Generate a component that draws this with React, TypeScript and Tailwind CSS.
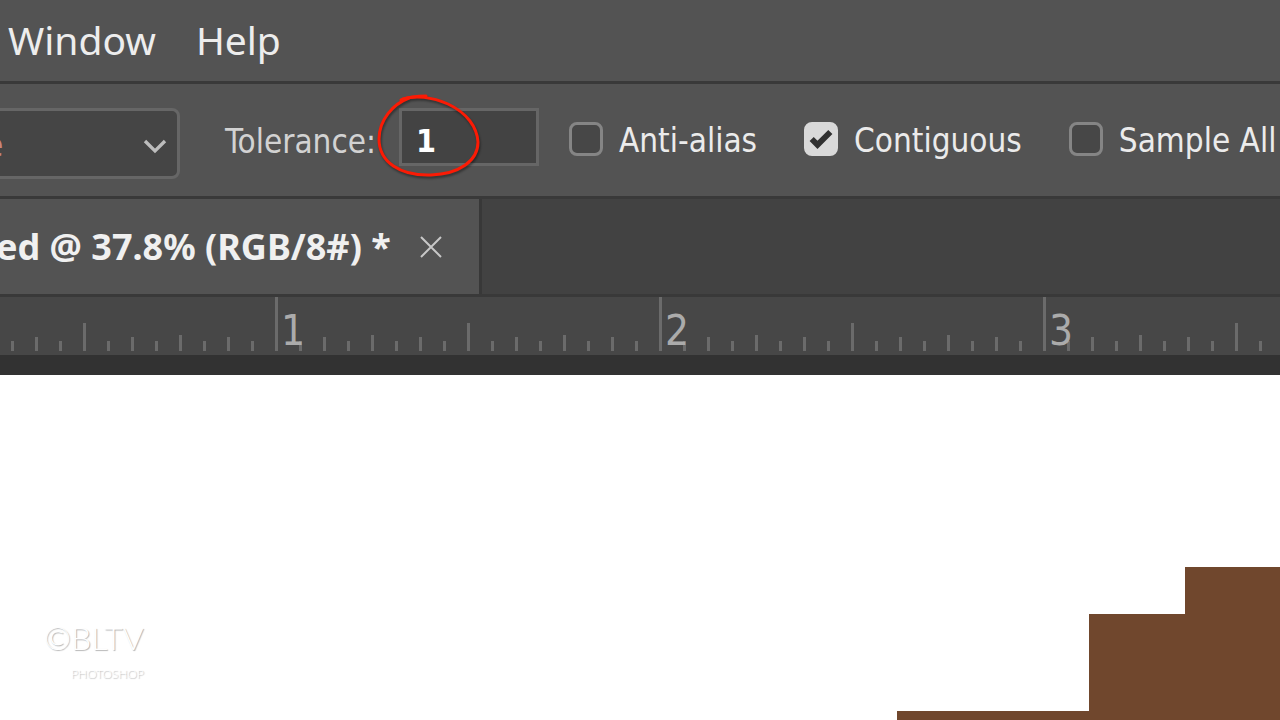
import { useState } from 'react';
import { Check, ChevronDown } from 'lucide-react';

const UNITS = [0, 1, 2, 3];

// sixteen ticks per ruler unit, the first one is the full-height divider
const TICKS = [
  'h-full', 'h-2.5', 'h-3.5', 'h-2.5', 'h-4', 'h-2.5', 'h-3.5', 'h-2.5',
  'h-7', 'h-2.5', 'h-3.5', 'h-2.5', 'h-4', 'h-2.5', 'h-3.5', 'h-2.5',
];

interface OptionProps {
  label: string;
  checked: boolean;
  onChange: (value: boolean) => void;
}

function OptionCheckbox({ label, checked, onChange }: OptionProps) {
  return (
    <label className="flex h-[62px] shrink-0 items-center gap-4 whitespace-nowrap">
      <span className="relative flex size-[34px] items-center justify-center">
        <input
          type="checkbox"
          checked={checked}
          onChange={(e) => onChange(e.target.checked)}
          className="size-full appearance-none rounded-lg border-[3px] border-[#858585] bg-[#474747] checked:border-[#d9d9d9] checked:bg-[#d9d9d9]"
        />
        {checked && (
          <Check className="pointer-events-none absolute size-7 text-[#303030]" strokeWidth={5} strokeLinecap="butt" strokeLinejoin="miter" />
        )}
      </span>
      <span className="pt-1">{label}</span>
    </label>
  );
}

function OptionsBar() {
  const [tolerance, setTolerance] = useState('1');
  const [antiAlias, setAntiAlias] = useState(false);
  const [contiguous, setContiguous] = useState(true);
  const [sampleAll, setSampleAll] = useState(false);

  return (
    <div className="flex h-[115px] items-start overflow-hidden border-b-[3px] border-[#393939] pt-6 font-['DejaVu_Sans_Condensed','Noto_Sans',sans-serif] text-[33px] text-[#ebebeb]">
      <div className="relative -ml-6 mr-[45px] shrink-0">
        <select
          aria-label="Sample size"
          className="h-[71px] w-[204px] appearance-none rounded-lg border-[3px] border-[#666666] bg-[#454545] pl-1.5 pt-1 text-[#c9867a]"
        >
          <option>e</option>
        </select>
        <ChevronDown className="pointer-events-none absolute right-[5px] top-[18px] size-10 text-[#bdbdbd]" strokeWidth={2} strokeLinecap="butt" strokeLinejoin="miter" />
      </div>
      <div className="relative mr-[30px] flex shrink-0 items-start">
        <label htmlFor="tolerance" className="w-[174px] leading-[68px] text-[#d2d2d2]">Tolerance:</label>
        <input
          id="tolerance"
          type="text"
          value={tolerance}
          onChange={(e) => setTolerance(e.target.value)}
          className="h-[58px] w-[140px] border-[3px] border-[#666666] bg-[#434343] px-3.5 pt-2 text-[32px] font-bold text-white"
        />
        <svg className="pointer-events-none absolute left-[150px] -top-4 h-[88px] w-[110px] drop-shadow-[1px_2px_1px_rgba(0,0,0,0.4)]" viewBox="0 0 110 88" fill="none" stroke="#fb1b05" strokeWidth="3" strokeLinecap="round">
          <path d="M28 7C40 3 57 5 73 12C92 21 102 35 103 50C103 69 84 82 56 83C25 84 4 70 4 47C4 28 18 12 34 6" />
          <path d="M26 8C34 5 42 4 51 4" />
        </svg>
      </div>
      <div className="flex shrink-0 gap-[47px]">
        <OptionCheckbox label="Anti-alias" checked={antiAlias} onChange={setAntiAlias} />
        <OptionCheckbox label="Contiguous" checked={contiguous} onChange={setContiguous} />
        <OptionCheckbox label="Sample All" checked={sampleAll} onChange={setSampleAll} />
      </div>
    </div>
  );
}

function Ruler() {
  return (
    <div className="flex h-[78px] overflow-hidden border-b-[20px] border-[#323232] bg-[#474747] pb-1">
      <div className="-ml-[109px] flex shrink-0">
        {UNITS.map((unit) => (
          <div key={unit} className="relative flex w-96 shrink-0 items-end">
            {TICKS.map((height, i) => (
              <span key={i} className={`${height} w-6 border-l-[3px] border-[#6b6b6b]`} />
            ))}
            {unit > 0 && (
              <span className="absolute left-1.5 top-2 font-['DejaVu_Sans_Condensed','DejaVu_Sans',sans-serif] text-[42px] leading-[52px] text-[#ababab]">{unit}</span>
            )}
          </div>
        ))}
      </div>
    </div>
  );
}

function Watermark() {
  return (
    <div className="absolute bottom-9 left-11 flex items-start font-['Lato','Liberation_Sans',sans-serif] font-light text-white [text-shadow:1px_1px_1px_#b5b5b5]">
      <span className="text-[32px] leading-[52px]">©</span>
      <div className="flex flex-col">
        <span className="text-[32px] leading-[52px]">BLTV</span>
        <span className="text-[12px] leading-5">PHOTOSHOP</span>
      </div>
    </div>
  );
}

export default function App() {
  return (
    <div className="flex min-h-screen flex-col overflow-hidden bg-[#535353] font-['Noto_Sans','Open_Sans',sans-serif]">
      <nav className="flex h-[84px] items-center gap-10 border-b-[3px] border-[#393939] px-2 text-[39px] text-[#ededed]">
        <button type="button">Window</button>
        <button type="button">Help</button>
      </nav>
      <OptionsBar />
      <div className="flex h-[98px] border-b-[3px] border-[#393939] bg-[#424242]">
        <div className="flex shrink-0 items-center gap-7 border-r-[3px] border-[#383838] bg-[#535353] pr-9">
          <span className="-ml-1 whitespace-nowrap text-[36px] font-bold text-[#f0f0f0]">ed @ 37.8% (RGB/8#) *</span>
          <button type="button" aria-label="Close tab">
            <svg className="size-6" viewBox="0 0 24 24" stroke="#c8c8c8" strokeWidth="2">
              <path d="M2 2L22 22M22 2L2 22" />
            </svg>
          </button>
        </div>
      </div>
      <Ruler />
      <main className="relative flex-1 bg-white">
        <svg className="absolute bottom-0 right-0 h-[153px] w-[383px]" viewBox="0 0 383 153">
          <path d="M0 153V144H192V47H288V0H383V153Z" fill="#70472d" />
        </svg>
        <Watermark />
      </main>
    </div>
  );
}
